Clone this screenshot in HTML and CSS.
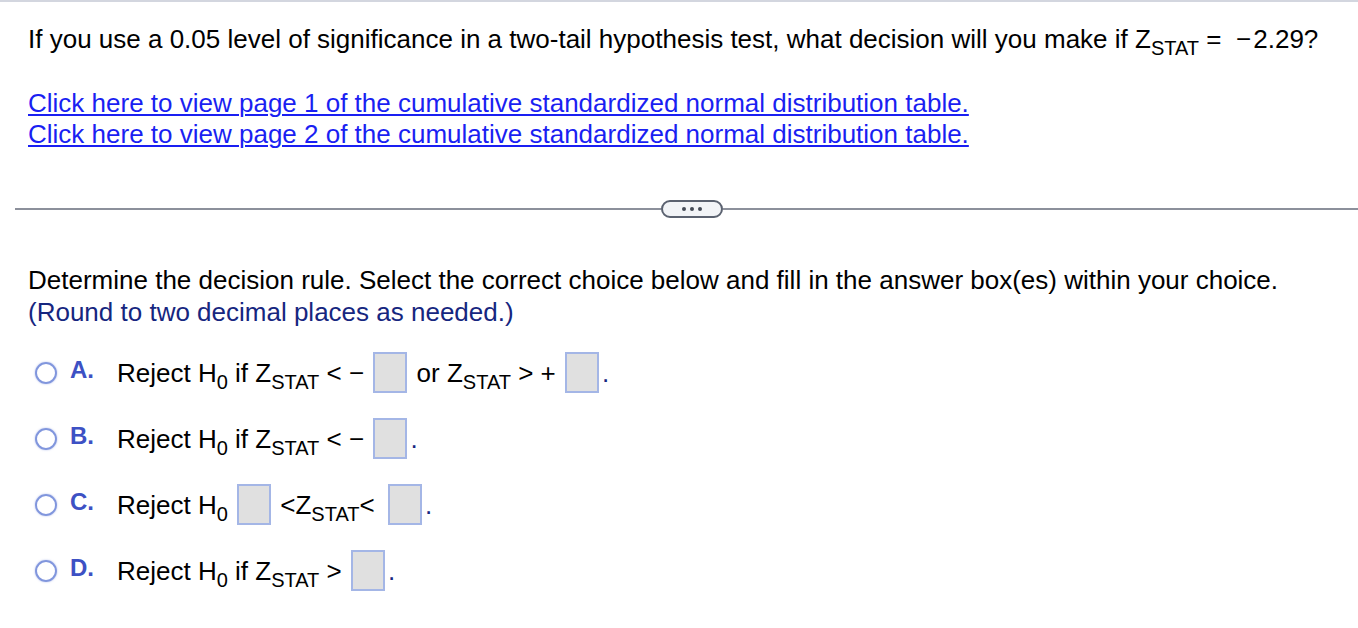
FILE: index.html
```html
<!DOCTYPE html>
<html>
<head>
<meta charset="utf-8">
<link rel="stylesheet" href="styles.css">
</head>
<body>
<div class="page">
  <p class="question">If you use a 0.05 level of significance in a two-tail hypothesis test, what decision will you make if Z<span class="sub">STAT</span> = &nbsp;&minus;&#8202;2.29?</p>
  <div class="links">
    <a href="#" class="link">Click here to view page 1 of the cumulative standardized normal distribution table.</a>
    <a href="#" class="link">Click here to view page 2 of the cumulative standardized normal distribution table.</a>
  </div>
  <div class="divider">
    <span class="line line-left"></span>
    <span class="pill"><span class="dot"></span><span class="dot"></span><span class="dot"></span></span>
    <span class="line line-right"></span>
  </div>
  <div class="instructions">
    <p class="instr">Determine the decision rule. Select the correct choice below and fill in the answer box(es) within your choice.</p>
    <p class="hint">(Round to two decimal places as needed.)</p>
  </div>
  <div class="choices">
    <div class="choice">
      <span class="radio"></span>
      <span class="letter">A.</span>
      <span class="body">Reject H<span class="sub">0</span> if Z<span class="sub">STAT</span> &lt; &minus; <span class="box"></span> or Z<span class="sub">STAT</span> &gt; + <span class="box"></span><span class="period">.</span></span>
    </div>
    <div class="choice">
      <span class="radio"></span>
      <span class="letter">B.</span>
      <span class="body">Reject H<span class="sub">0</span> if Z<span class="sub">STAT</span> &lt; &minus; <span class="box"></span><span class="period">.</span></span>
    </div>
    <div class="choice">
      <span class="radio"></span>
      <span class="letter">C.</span>
      <span class="body">Reject H<span class="sub">0</span> <span class="box"></span> &lt;Z<span class="sub">STAT</span>&lt; <span class="box box-wide"></span><span class="period">.</span></span>
    </div>
    <div class="choice">
      <span class="radio"></span>
      <span class="letter">D.</span>
      <span class="body">Reject H<span class="sub">0</span> if Z<span class="sub">STAT</span> &gt; <span class="box"></span><span class="period">.</span></span>
    </div>
  </div>
</div>
</body>
</html>
```

FILE: styles.css
```css
html, body {
  margin: 0;
  padding: 0;
  background: #ffffff;
}

body {
  font-family: "Liberation Sans", Arial, Helvetica, sans-serif;
  color: #000000;
}

.page {
  border-top: 2px solid #d3d6df;
  min-height: 626px;
}

.question {
  margin: 0;
  padding: 22px 0 0 28px;
  font-size: 26px;
  line-height: 30px;
}

.sub {
  font-size: 20px;
  vertical-align: -7px;
  line-height: 0;
}

.links {
  display: flex;
  flex-direction: column;
  align-items: flex-start;
  margin-top: 34px;
  padding-left: 28px;
}

.link {
  color: #1a1ff2;
  font-size: 26px;
  line-height: 31px;
  text-decoration: underline;
  text-decoration-thickness: 2px;
  text-underline-offset: 2px;
}

.divider {
  display: flex;
  align-items: center;
  margin-top: 50px;
  padding-left: 15px;
  height: 18px;
}

.line {
  height: 2px;
  background: #8c909b;
}

.line-left {
  width: 646px;
}

.line-right {
  flex: 1;
}

.pill {
  box-sizing: border-box;
  width: 62px;
  height: 18px;
  border: 2px solid #5b6270;
  border-radius: 9px;
  background: #f2f4f7;
  display: flex;
  align-items: center;
  justify-content: center;
  gap: 4px;
}

.dot {
  width: 4px;
  height: 4px;
  border-radius: 50%;
  background: #454b57;
}

.instructions {
  margin-top: 46px;
  padding-left: 28px;
}

.instr,
.hint {
  margin: 0;
  font-size: 26px;
  line-height: 32px;
}

.hint {
  color: #16267f;
}

.choices {
  margin-top: 24px;
  display: flex;
  flex-direction: column;
  gap: 25px;
}

.choice {
  display: flex;
  align-items: center;
  height: 41px;
  padding-left: 35px;
}

.radio {
  box-sizing: border-box;
  width: 22px;
  height: 22px;
  border-radius: 50%;
  border: 2px solid #8196dd;
  box-shadow: 0 0 2px rgba(120, 140, 220, 0.6);
  flex: none;
}

.letter {
  margin-left: 13px;
  width: 47px;
  font-weight: bold;
  font-size: 24px;
  color: #3d51c4;
  position: relative;
  top: -3px;
}

.body {
  font-size: 26px;
  line-height: 41px;
  white-space: nowrap;
}

.box {
  display: inline-block;
  box-sizing: border-box;
  width: 34px;
  height: 41px;
  border: 2px solid #a4b6e6;
  background: #e0e0e0;
  vertical-align: -11px;
  margin: 0 2px;
}

.box-wide {
  margin-left: 6px;
}

.period {
  color: #16267f;
  margin-left: 1px;
}
```
